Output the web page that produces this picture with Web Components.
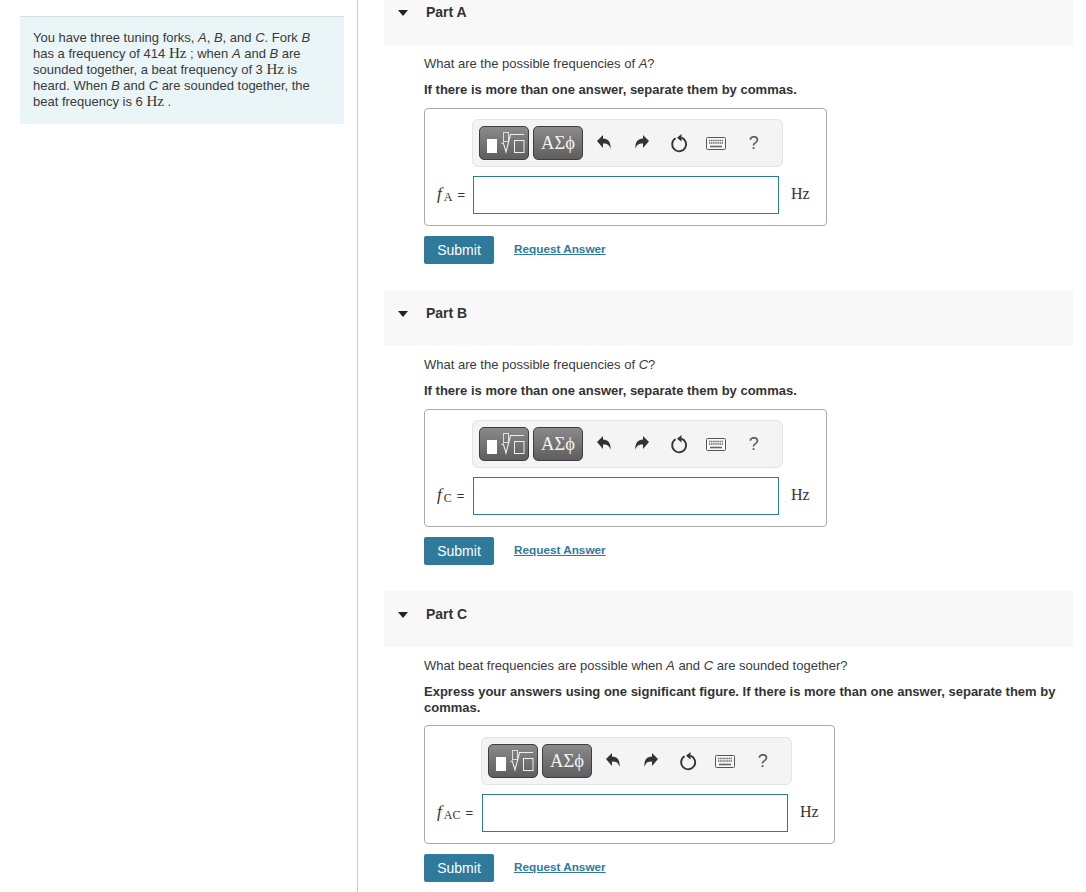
<!DOCTYPE html>
<html lang="en"><head><meta charset="utf-8"><title>Tuning forks</title>
<style>
html,body{margin:0;padding:0;background:#fff}
body{font:13px/16px "Liberation Sans",Arial,sans-serif;color:#333;height:892px;overflow:hidden}
</style></head><body>
<quiz-page>
  <problem-intro slot="intro">You have three tuning forks, <i>A</i>, <i>B</i>, and <i>C</i>. Fork <i>B</i> has a frequency of 414 <m-unit></m-unit> ; when <i>A</i> and <i>B</i> are sounded together, a beat frequency of 3 <m-unit></m-unit> is heard. When <i>B</i> and <i>C</i> are sounded together, the beat frequency is 6 <m-unit></m-unit> .</problem-intro>
  <quiz-part title="Part A" sub="A">
    <span slot="q">What are the possible frequencies of <i>A</i>?</span>
    <span slot="hint">If there is more than one answer, separate them by commas.</span>
  </quiz-part>
  <quiz-part title="Part B" sub="C">
    <span slot="q">What are the possible frequencies of <i>C</i>?</span>
    <span slot="hint">If there is more than one answer, separate them by commas.</span>
  </quiz-part>
  <quiz-part title="Part C" sub="AC" tall>
    <span slot="q">What beat frequencies are possible when <i>A</i> and <i>C</i> are sounded together?</span>
    <span slot="hint">Express your answers using one significant figure. If there is more than one answer, separate them by commas.</span>
  </quiz-part>
</quiz-page>
<script>
function def(name, css, html, init){
  customElements.define(name, class extends HTMLElement{
    constructor(){super();const r=this.attachShadow({mode:"open"});r.innerHTML="<style>"+css+"</style>"+(typeof html==="function"?html(this):html);}
    connectedCallback(){if(init)init(this);}
  });
}
def("quiz-page",`
:host{display:grid;grid-template-columns:358px 1fr;width:1073px;height:892px;overflow:hidden}
.l{border-right:1px solid #c6ccd3;padding:16px 13px 0 20px;height:892px;box-sizing:border-box}
.r{padding-left:26px;margin-top:-11px;min-width:0}
`,`<div class="l"><slot name="intro"></slot></div><div class="r"><slot></slot></div>`);

def("problem-intro",`
:host{display:block;background:#e9f5f7;border-top:1px solid #d5dde3;padding:13px 13px 14px 13px;font-size:13px;line-height:16px;color:#3a3a3a;width:298px}
`,`<slot></slot>`);

def("m-unit",`
:host{display:inline;font:15px/0 "Liberation Serif","Times New Roman",serif;color:#333}
`,`Hz`);

def("tool-bar",`
:host{display:flex;align-items:center;box-sizing:border-box;width:311px;height:48px;background:#f4f4f4;border:1px solid #e3e3e3;border-radius:6px;padding:0 6px;margin-left:-1px}
.b{flex:none;box-sizing:border-box;width:50px;height:34px;border:1px solid #3f3f3f;border-radius:5px;background:linear-gradient(#8a8a8a,#5e5e5e);display:flex;align-items:center;justify-content:center;color:#f2f2f2;margin-right:4px}
.s{font:18.500px/1 "Liberation Serif",serif}
.i{flex:none;width:37.500px;height:24px;display:flex;align-items:center;justify-content:center}
.q{font:18px/1 "Liberation Sans",sans-serif;color:#555}
svg{display:block}
`,`<div class="b"><svg width="46" height="30" viewBox="0 0 46 30"><rect x="6" y="11" width="10" height="14" fill="#fff"/><rect x="22.500" y="4.500" width="5" height="9" fill="none" stroke="#ddd" stroke-width="1"/><path d="M20.500 15.500l1.800-.6 2.700 9.100 4.500-17.500H43" fill="none" stroke="#eee" stroke-width="1.100"/><rect x="33.500" y="12.500" width="9.500" height="12" fill="none" stroke="#eee" stroke-width="1"/></svg></div>
<div class="b s">ΑΣϕ</div>
<div class="i" style="margin-left:-2px"><svg width="16" height="18" viewBox="0 0 16 18"><path d="M1 7l6-6v3.600c5 .2 8 3 7.600 10.400-1.200-4-3.200-5.600-7.600-5.400V14z" fill="#333"/></svg></div>
<div class="i"><svg width="16" height="18" viewBox="0 0 16 18" style="margin-left:2px"><path d="M15 7L9 1v3.600C4 4.800 1 7.600 1.400 15c1.200-4 3.200-5.600 7.600-5.400V14z" fill="#333"/></svg></div>
<div class="i"><svg width="18" height="20" viewBox="0 0 18 20"><path d="M5.600 5.300a7 7 0 1 0 5.800-.6" fill="none" stroke="#333" stroke-width="1.900"/><path d="M11.500 1v7.400L7 4.700z" fill="#333"/></svg></div>
<div class="i"><svg width="20" height="13" viewBox="0 0 20 13"><rect x=".5" y=".5" width="19" height="12" rx="1" fill="#f8f8f8" stroke="#555"/><path d="M3 3.500h14M3 6h14" stroke="#666" stroke-width="1.500" stroke-dasharray="1.400 .7"/><path d="M4 9.500h12" stroke="#666" stroke-width="1.600"/></svg></div>
<div class="i q">?</div>`);

def("answer-box",`
:host{display:grid;grid-template-columns:28px 306px 22px;column-gap:8px;box-sizing:border-box;width:max-content;border:1px solid #aaa;border-radius:4px;padding:10px 17px 11px 12px;margin-top:10px;color:#333}
:host([tall]){grid-template-columns:37px 306px 22px;margin-top:9px;padding:11px 16px 11px 12px}
.t{grid-column:2;grid-row:1;margin-bottom:9px}
.lab{grid-column:1;grid-row:2;align-self:center;font:15px/16px "Liberation Serif",serif;white-space:nowrap;display:flex;align-items:baseline;position:relative;top:-1px}
.lab i{font-size:17px;margin-right:2px}
.lab sub{font-size:12px;line-height:0;vertical-align:baseline;position:relative;top:2px}
.lab span{font:13px/16px "Liberation Sans",sans-serif;margin-left:5px}
input{grid-column:2;grid-row:2;box-sizing:border-box;width:306px;height:38px;border:1px solid #2f7a9b;background:#fff;padding:0;margin:0;outline:0;display:block}
.u{grid-column:3;grid-row:2;align-self:center;font:16px/16px "Liberation Serif",serif;margin-left:4px;position:relative;top:-1px;white-space:nowrap}
`,h=>`<tool-bar class="t"></tool-bar><div class="lab"><i>f</i><sub>${h.getAttribute("sub")}</sub><span>=</span></div><input aria-label="answer"><div class="u">Hz</div>`);

def("quiz-part",`
:host{display:block;margin-bottom:26px;width:689px}
header{box-sizing:border-box;height:56px;background:#f8f8f8;display:flex;padding-top:15px;line-height:16px;font-weight:700;font-size:14px;color:#333}
.tri{width:0;height:0;border:5.500px solid transparent;border-top:6px solid #222;border-bottom:0;margin:6px 18px 0 14px}
.c{padding:11px 0 0 40px}
.q{line-height:16px;margin-bottom:10px;color:#3a3a3a}
.h{font-weight:700;line-height:16px;color:#333;margin-right:8px}
.a{display:flex;align-items:center;margin-top:10px}
button{box-sizing:border-box;width:70px;height:28px;background:#2f7a9b;color:#fff;border:0;border-radius:2px;font:500 14px/1 "Liberation Sans",sans-serif;padding:0;text-align:center}
a{color:#2f7a9b;font-weight:700;font-size:11.750px;margin:-3px 0 0 20px;text-decoration:underline}
`,h=>`<header><div class="tri"></div><div>${h.getAttribute("title")}</div></header><div class="c"><div class="q"><slot name="q"></slot></div><div class="h"><slot name="hint"></slot></div><answer-box sub="${h.getAttribute("sub")}"${h.hasAttribute("tall")?" tall":""}></answer-box><div class="a"><button>Submit</button><a href="#">Request Answer</a></div></div>`);
</script>
</body></html>
